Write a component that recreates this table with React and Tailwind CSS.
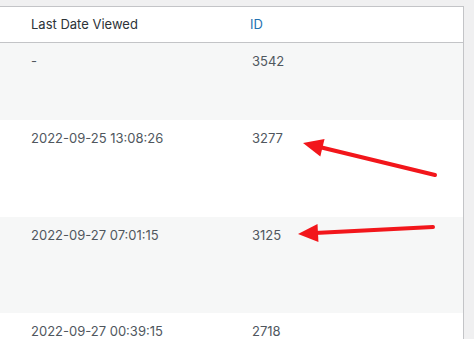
import React from "react";

const rows = [
  { date: "-", id: "3542", h: "h-[77px]", bg: "bg-[#f6f7f7]" },
  { date: "2022-09-25 13:08:26", id: "3277", h: "h-[97px]", bg: "bg-white" },
  { date: "2022-09-27 07:01:15", id: "3125", h: "h-[96px]", bg: "bg-[#f6f7f7]" },
  { date: "2022-09-27 00:39:15", id: "2718", h: "h-[96px]", bg: "bg-white" },
];

const Arrow = ({ x1, y1, x2, y2 }) => {
  // x1,y1 = tail, x2,y2 = tip
  const dx = x2 - x1;
  const dy = y2 - y1;
  const len = Math.hypot(dx, dy);
  const ux = dx / len;
  const uy = dy / len;
  const head = 20;
  const half = 9;
  const bx = x2 - ux * head;
  const by = y2 - uy * head;
  const p1 = `${bx - uy * half},${by + ux * half}`;
  const p2 = `${bx + uy * half},${by - ux * half}`;
  return (
    <g>
      <line
        x1={x1}
        y1={y1}
        x2={bx + ux * 3}
        y2={by + uy * 3}
        stroke="#f2161b"
        strokeWidth="4"
        strokeLinecap="round"
      />
      <polygon points={`${x2},${y2} ${p1} ${p2}`} fill="#f2161b" />
    </g>
  );
};

export default function App() {
  return (
    <div className="relative w-[474px] h-[339px] overflow-hidden bg-[#f0f0f1] pt-[6px] pr-[10px] font-['Inter',sans-serif] text-[13px]">
      <div className="border-t border-r border-[#c3c4c7] bg-white">
        <div className="flex items-center h-[36px] border-b border-[#c3c4c7] text-[#2c3338]">
          <div className="w-[250px] pl-[31px]">Last Date Viewed</div>
          <div className="text-[#2271b1]">ID</div>
        </div>
        {rows.map((r) => (
          <div key={r.id} className={`flex items-start pt-[9px] text-[#50575e] ${r.h} ${r.bg}`}>
            <div className="w-[252px] pl-[31px] leading-[19px]">{r.date}</div>
            <div className="leading-[19px]">{r.id}</div>
          </div>
        ))}
      </div>
      <svg className="absolute left-0 top-0 pointer-events-none" width="474" height="339">
        <Arrow x1={435} y1={175} x2={303} y2={143} />
        <Arrow x1={433} y1={227} x2={298} y2={234} />
      </svg>
    </div>
  );
}
